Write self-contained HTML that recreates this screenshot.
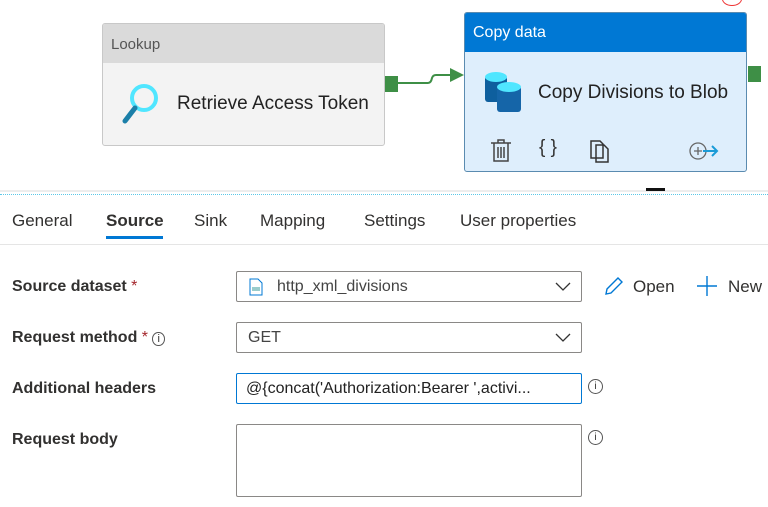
<!DOCTYPE html><html><head><style>
body{margin:0;width:768px;height:507px;background:#fff;font-family:"Liberation Sans",sans-serif;position:relative;overflow:hidden;color:#323130}
.a{position:absolute}
.lbl{position:absolute;left:12px;font-size:16px;font-weight:bold;color:#323130}
.inp{position:absolute;left:236px;width:346px;border:1px solid #8a8886;border-radius:2px;font-size:16px;box-sizing:border-box}
.tab{position:absolute;top:211px;font-size:17px;color:#323130}
</style></head><body>
<div class="a" style="left:102px;top:23px;width:281px;height:121px;border:1px solid #c8c8c8;border-radius:3px;background:#f3f3f3;overflow:hidden">
<div style="height:39px;background:#dadada;font-size:15px;color:#555;line-height:42px;padding-left:8px">Lookup</div>
<svg class="a" style="left:18px;top:57px" width="40" height="46"><circle cx="23" cy="17" r="12" fill="none" stroke="#50e6ff" stroke-width="4"/><line x1="14" y1="27" x2="4" y2="40" stroke="#1b7fa8" stroke-width="5" stroke-linecap="round"/></svg>
<div class="a" style="left:74px;top:69px;font-size:19px;color:#222">Retrieve Access Token</div>
</div>
<div class="a" style="left:385px;top:76px;width:13px;height:16px;background:#3e8f46"></div>
<svg class="a" style="left:398px;top:66px" width="68" height="24"><path d="M0 17 H30 Q33 17 34 12 Q35 9 38 9 H54" fill="none" stroke="#3e8f46" stroke-width="2"/><path d="M52 2 L66 9 L52 16Z" fill="#3e8f46"/></svg>
<div class="a" style="left:464px;top:12px;width:281px;height:158px;border:1px solid #5a8bb0;border-radius:3px;background:#deeefc;overflow:hidden">
<div style="height:39px;background:#0078d4;color:#fff;font-size:16px;line-height:40px;padding-left:8px">Copy data</div>
<svg class="a" style="left:18px;top:57px" width="42" height="44"><rect x="2" y="6" width="22" height="26" rx="3" fill="#0e5f9e"/><ellipse cx="13" cy="7" rx="11" ry="5" fill="#50e6ff"/><rect x="14" y="16" width="24" height="26" rx="3" fill="#1565a8"/><ellipse cx="26" cy="17" rx="12" ry="5" fill="#50e6ff"/></svg>
<div class="a" style="left:73px;top:69px;font-size:19px;color:#222">Copy Divisions to Blob</div>
<svg class="a" style="left:25px;top:126px" width="22" height="24"><path d="M1 4H21M8 4V1H14V4M4 4V22H18V4M8 8V19M11 8V19M14 8V19" fill="none" stroke="#444" stroke-width="1.5"/></svg>
<div class="a" style="left:74px;top:124px;font-size:19px;color:#333">{ }</div>
<svg class="a" style="left:124px;top:126px" width="22" height="24"><path d="M2 2H11L14 5V19H2Z M7 6H15L19 10V23H7Z" fill="none" stroke="#333" stroke-width="1.5"/></svg>
<svg class="a" style="left:224px;top:128px" width="32" height="20"><circle cx="9" cy="10" r="8" fill="none" stroke="#666" stroke-width="1.3"/><path d="M5 10H13M9 6V14" stroke="#666" stroke-width="1.3"/><path d="M14 10H28M23 5L28 10L23 15" fill="none" stroke="#1a9bd7" stroke-width="2"/></svg>
</div>
<div class="a" style="left:748px;top:66px;width:13px;height:16px;background:#3e8f46"></div>
<div class="a" style="left:722px;top:-8px;width:18px;height:12px;border:1.5px solid #e33;border-radius:50%"></div>
<div class="a" style="left:0;top:190px;width:768px;height:2px;background:#ededed"></div>
<div class="a" style="left:0;top:194px;width:768px;border-top:1px dotted #5cc8e8"></div>
<div class="a" style="left:646px;top:188px;width:19px;height:3px;background:#111"></div>
<div class="tab" style="left:12px">General</div>
<div class="tab" style="left:106px;font-weight:bold">Source</div>
<div class="tab" style="left:194px">Sink</div>
<div class="tab" style="left:260px">Mapping</div>
<div class="tab" style="left:364px">Settings</div>
<div class="tab" style="left:460px">User properties</div>
<div class="a" style="left:106px;top:236px;width:57px;height:3px;background:#0078d4"></div>
<div class="a" style="left:0;top:244px;width:768px;height:1px;background:#e5e5e5"></div>
<div class="lbl" style="top:278px">Source dataset <span style="color:#a4262c;font-weight:normal">*</span></div>
<div class="lbl" style="top:329px">Request method <span style="color:#a4262c;font-weight:normal">*</span> <span style="font-weight:normal;font-size:11px;border:1px solid #555;border-radius:50%;padding:0 4px">i</span></div>
<div class="lbl" style="top:380px">Additional headers</div>
<div class="lbl" style="top:431px">Request body</div>
<div class="inp" style="top:271px;height:31px;line-height:29px;padding-left:40px;color:#444">http_xml_divisions
<svg class="a" style="left:12px;top:6px" width="14" height="18"><path d="M1 1H9L13 5V17H1Z" fill="#fff" stroke="#0078d4"/><rect x="3" y="9" width="8" height="4" fill="#9cc"/></svg>
<svg class="a" style="right:10px;top:10px" width="16" height="10"><path d="M1 1L8 8L15 1" fill="none" stroke="#333" stroke-width="1.3"/></svg></div>
<svg class="a" style="left:603px;top:275px" width="22" height="22"><path d="M3 19L4 14L15 3L19 7L8 18Z" fill="none" stroke="#0078d4" stroke-width="1.4"/></svg>
<div class="a" style="left:633px;top:277px;font-size:17px">Open</div>
<svg class="a" style="left:697px;top:276px" width="20" height="20"><path d="M10 0V20M0 10H20" stroke="#0078d4" stroke-width="1.4"/></svg>
<div class="a" style="left:728px;top:277px;font-size:17px">New</div>
<div class="inp" style="top:322px;height:31px;line-height:29px;padding-left:11px;color:#444">GET
<svg class="a" style="right:10px;top:10px" width="16" height="10"><path d="M1 1L8 8L15 1" fill="none" stroke="#333" stroke-width="1.3"/></svg></div>
<div class="inp" style="top:373px;height:31px;line-height:29px;padding-left:9px;border-color:#0078d4;color:#222">@{concat('Authorization:Bearer ',activi...</div>
<div class="a" style="left:588px;top:379px;width:13px;height:13px;border:1px solid #555;border-radius:50%;font-size:10px;text-align:center;line-height:13px">i</div>
<div class="inp" style="top:424px;height:73px"></div>
<div class="a" style="left:588px;top:430px;width:13px;height:13px;border:1px solid #555;border-radius:50%;font-size:10px;text-align:center;line-height:13px">i</div>
</body></html>
